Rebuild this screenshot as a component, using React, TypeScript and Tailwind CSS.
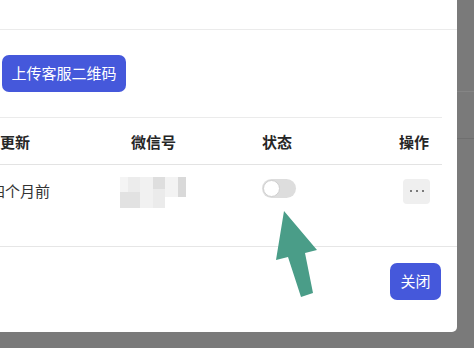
export default function App() {
  const font = { fontFamily: '"Noto Sans CJK SC", "Noto Sans", sans-serif' };
  return (
    <div className="relative w-[474px] h-[348px] overflow-hidden bg-[#7a7a7a]" style={font}>
      {/* overlay streaks on the right */}
      <div className="absolute left-[457px] top-[91px] w-[17px] h-px bg-[#858585]" />
      <div className="absolute left-[457px] top-[138px] w-[17px] h-px bg-[#6f6f6f]" />

      {/* Modal */}
      <div className="w-[457px] h-[332px] bg-white rounded-br-[5px] flex flex-col">
        <div className="h-[30px] border-b border-[#ebebeb] shrink-0" />

        <div className="pt-[25px] pl-[2px]">
          <button className="h-[37px] w-[124px] rounded-[7px] bg-[#4558db] text-white text-[15px] flex items-center justify-center">
            上传客服二维码
          </button>
        </div>

        {/* Table */}
        <div className="mt-[25px] mr-[15px] border-t border-[#ebebeb]">
          <div className="h-[47px] flex items-center border-b border-[#e3e3e3] text-[15px] font-semibold text-[#262626] pt-[2px]">
            <div className="w-[131px] overflow-hidden whitespace-nowrap">
              <span className="block -ml-[30px]">最近更新</span>
            </div>
            <div className="w-[131px]">微信号</div>
            <div className="flex-1">状态</div>
            <div className="pr-[13px]">操作</div>
          </div>

          <div className="h-[52px] flex items-center text-[15px] text-[#333]">
            <div className="w-[131px] overflow-hidden whitespace-nowrap">
              <span className="block -ml-[40px]">大约四个月前</span>
            </div>
            <div className="w-[131px]">
              <svg width="66" height="31" className="-ml-[11px] mt-[3px]">
                <rect x="0" y="0" width="20" height="15" fill="#f4f4f4" />
                <rect x="0" y="15" width="20" height="16" fill="#e2e2e2" />
                <rect x="8" y="0" width="12" height="15" fill="#ececec" />
                <rect x="20" y="0" width="13" height="31" fill="#f1f1f1" />
                <rect x="33" y="0" width="12" height="12" fill="#dedede" />
                <rect x="33" y="12" width="12" height="19" fill="#ebebeb" />
                <rect x="45" y="0" width="13" height="20" fill="#f3f3f3" />
                <rect x="58" y="0" width="8" height="20" fill="#d9d9d9" />
              </svg>
            </div>
            <div className="flex-1">
              <div className="w-[34px] h-[19px] rounded-full bg-[#dddddd] p-[1px] -mt-[5px]">
                <div className="w-[17px] h-[17px] rounded-full bg-white border border-[#cfcfcf]" />
              </div>
            </div>
            <div className="pr-[12px]">
              <div className="w-[27px] h-[25px] rounded-[4px] bg-[#efefef] flex items-center justify-center gap-[4px]">
                <span className="w-[2px] h-[2px] rounded-full bg-[#555]" />
                <span className="w-[2px] h-[2px] rounded-full bg-[#555]" />
                <span className="w-[2px] h-[2px] rounded-full bg-[#555]" />
              </div>
            </div>
          </div>
        </div>

        {/* Footer */}
        <div className="mt-[29px] border-t border-[#e6e6e6] pt-[16px] pr-[16px] flex justify-end">
          <button className="h-[37px] w-[51px] rounded-[7px] bg-[#4558db] text-white text-[15px] flex items-center justify-center">
            关闭
          </button>
        </div>
      </div>

      {/* Annotation arrow */}
      <svg className="absolute left-0 top-0 pointer-events-none" width="474" height="348">
        <polygon
          points="284,211 317,250 305,253 313,293 301,297 288,257 276,260"
          fill="#4a9d88"
        />
      </svg>
    </div>
  );
}
